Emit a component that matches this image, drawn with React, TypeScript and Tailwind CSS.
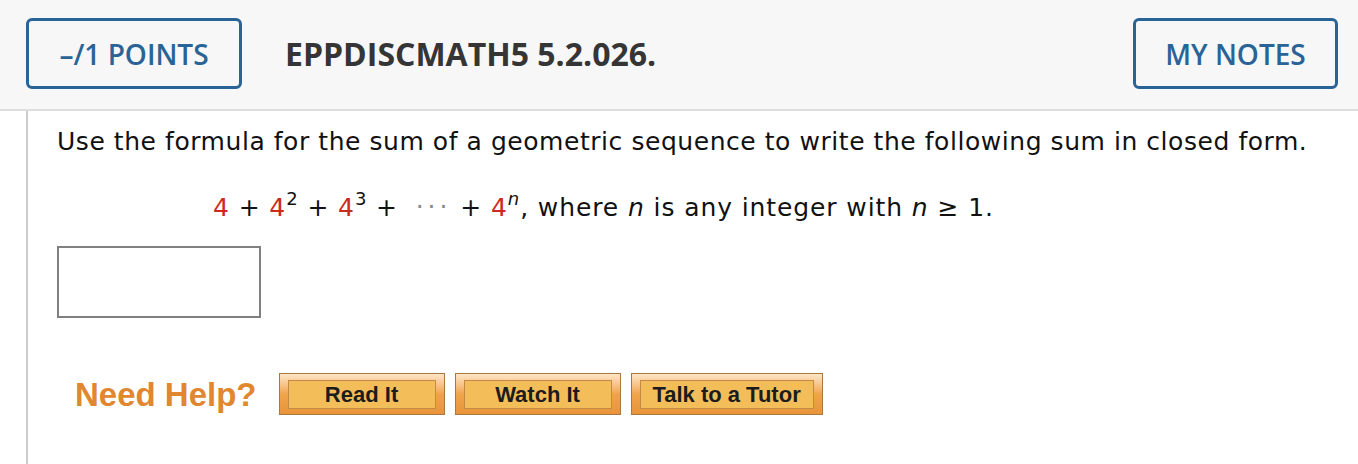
import React from "react";

function HelpButton({ label, w }: { label: string; w: string }) {
  return (
    <div className={`${w} h-[42px] border border-[#a8783c] bg-gradient-to-b from-[#fde6c6] via-[#f0a44a] to-[#e8943a] pt-[6px] pb-[5px] px-[8px]`}>
      <div className="h-full w-full border border-[#c48a4a] bg-[#f3be5a] flex items-center justify-center text-[22px] font-bold text-[#1c1c1c] [font-family:'Liberation_Sans',Arial,sans-serif]">
        {label}
      </div>
    </div>
  );
}

export default function App() {
  return (
    <div className="w-[1358px] h-[464px] bg-white overflow-hidden">
      <div className="h-[111px] bg-[#f7f7f7] border-b-2 border-[#dedede] flex items-center justify-between pl-[26px] pr-[20px] pb-[2px] [font-family:'Open_Sans',sans-serif]">
        <div className="flex items-center">
          <div className="w-[216px] h-[71px] border-[3px] border-[#2a6496] rounded-[6px] flex items-center justify-center text-[28px] font-semibold text-[#2a6496]">
            –/1 POINTS
          </div>
          <div className="ml-[43px] text-[32px] font-bold text-[#353535]">EPPDISCMATH5 5.2.026.</div>
        </div>
        <div className="w-[205px] h-[71px] border-[3px] border-[#2a6496] rounded-[6px] flex items-center justify-center text-[28px] font-semibold text-[#2a6496]">
          MY NOTES
        </div>
      </div>
      <div className="ml-[26px] border-l-2 border-[#cccccc] h-[353px] pl-[29px] pt-[15px] [font-family:'DejaVu_Sans',Verdana,sans-serif] text-[#111] text-[25px] tracking-[0.55px]">
        <div className="leading-[32px] whitespace-nowrap">Use the formula for the sum of a geometric sequence to write the following sum in closed form.</div>
        <div className="mt-[34px] ml-[156px] leading-[32px] whitespace-pre tracking-[0.9px]">
          <span className="text-[#cc2a1e]">4</span>
          {" + "}
          <span className="text-[#cc2a1e]">4</span>
          <span className="text-[18px] relative top-[-11px]">2</span>
          {" + "}
          <span className="text-[#cc2a1e]">4</span>
          <span className="text-[18px] relative top-[-11px]">3</span>
          {" +  "}
          <span className="text-[#8a8a8a] tracking-[4px] relative top-[-1px]">···</span>
          {" + "}
          <span className="text-[#cc2a1e]">4</span>
          <span className="text-[18px] italic relative top-[-11px]">n</span>
          {", where "}
          <i>n</i>
          {" is any integer with "}
          <i>n</i>
          {" ≥ 1."}
        </div>
        <div className="mt-[20px] w-[204px] h-[72px] border-2 border-[#808080] bg-white"></div>
        <div className="mt-[51px] flex items-center tracking-normal">
          <div className="ml-[18px] text-[33px] font-bold text-[#e0872f] [font-family:'Liberation_Sans',Arial,sans-serif] relative top-[1px]">Need Help?</div>
          <div className="ml-[22px] flex gap-[10px]">
            <HelpButton label="Read It" w="w-[166px]" />
            <HelpButton label="Watch It" w="w-[166px]" />
            <HelpButton label="Talk to a Tutor" w="w-[192px]" />
          </div>
        </div>
      </div>
    </div>
  );
}
